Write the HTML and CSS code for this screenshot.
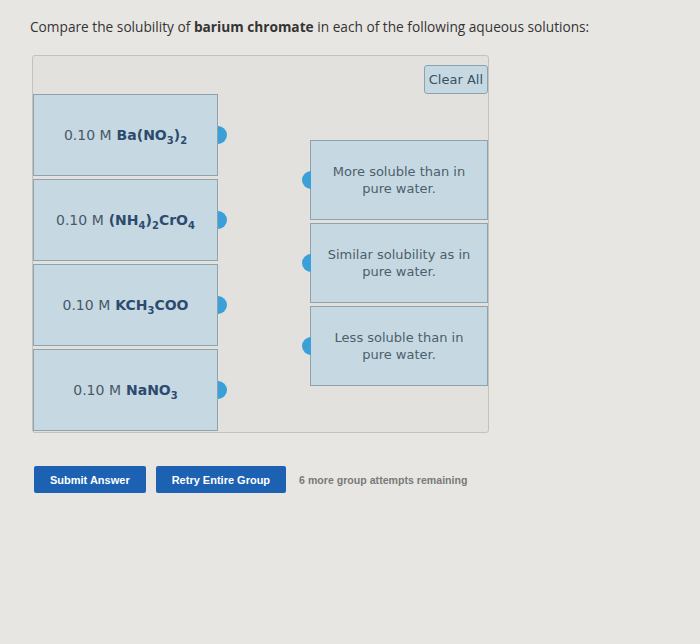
FILE: index.html
```html
<!DOCTYPE html>
<html lang="en">
<head>
    <meta charset="UTF-8">
    <meta name="viewport" content="width=device-width, initial-scale=1.0">
    <title>Barium Chromate Solubility</title>
    <link rel="stylesheet" href="styles.css">
</head>
<body>
    <p class="question">Compare the solubility of <b>barium chromate</b> in each of the following aqueous solutions:</p>

    <!-- Drag and drop matching area -->
    <div class="match-panel">
        <div class="item-column">
            <div class="item">0.10 M <span class="formula">Ba(NO<sub>3</sub>)<sub>2</sub></span></div>
            <div class="item">0.10 M <span class="formula">(NH<sub>4</sub>)<sub>2</sub>CrO<sub>4</sub></span></div>
            <div class="item">0.10 M <span class="formula">KCH<sub>3</sub>COO</span></div>
            <div class="item">0.10 M <span class="formula">NaNO<sub>3</sub></span></div>
        </div>
        <div class="target-column">
            <button type="button" class="clear-button">Clear All</button>
            <div class="targets">
                <div class="target">More soluble than in pure water.</div>
                <div class="target">Similar solubility as in pure water.</div>
                <div class="target">Less soluble than in pure water.</div>
            </div>
        </div>
    </div>

    <div class="actions">
        <button type="button" class="action-button">Submit Answer</button>
        <button type="button" class="action-button">Retry Entire Group</button>
        <span class="attempts">6 more group attempts remaining</span>
    </div>
</body>
</html>
```

FILE: styles.css
```css
body {
    margin: 0;
    padding: 17px 30px;
    background-color: #e8e6e2;
    font-family: "DejaVu Sans", Verdana, sans-serif;
}
.question {
    margin: 0 0 19px 0;
    font-family: "Open Sans", Arial, sans-serif;
    font-size: 13.7px;
    line-height: 19px;
    color: #343434;
}
.question b {
    font-weight: 700;
}

/* Matching panel */
.match-panel {
    box-sizing: border-box;
    width: 457px;
    height: 378px;
    margin-left: 2px;
    border: 1px solid #c4c2bd;
    border-radius: 3px;
    background-color: #e3e1dd;
    display: flex;
    justify-content: space-between;
}
.item-column {
    display: flex;
    flex-direction: column;
    gap: 3px;
    padding-top: 38px;
}
.item, .target {
    position: relative;
    box-sizing: border-box;
    display: flex;
    align-items: center;
    justify-content: center;
    text-align: center;
    background-color: #c6d9e3;
    border: 1px solid #8fa3ad;
}
.item {
    width: 185px;
    height: 82px;
    font-size: 14px;
    color: #4a5866;
}
.formula {
    margin-left: 5px;
    font-weight: bold;
    color: #2d4b6e;
}
.formula sub {
    font-size: 10px;
    line-height: 0;
    vertical-align: -4px;
}
/* connector tabs */
.item::after, .target::before {
    content: "";
    position: absolute;
    top: 50%;
    width: 9px;
    height: 18px;
    margin-top: -9px;
    background-color: #3b9fd8;
}
.item::after {
    right: -10px;
    border-radius: 0 9px 9px 0;
}
.target::before {
    left: -9px;
    border-radius: 9px 0 0 9px;
}

.target-column {
    display: flex;
    flex-direction: column;
    align-items: flex-end;
    padding-top: 9px;
}
.clear-button {
    height: 29px;
    padding: 0 4px;
    background-color: #c6d9e3;
    border: 1px solid #8aa3ae;
    border-radius: 3px;
    font-family: "DejaVu Sans", Verdana, sans-serif;
    font-size: 13px;
    color: #3b4f5e;
}
.targets {
    display: flex;
    flex-direction: column;
    gap: 3px;
    margin-top: 46px;
}
.target {
    width: 178px;
    height: 80px;
    padding: 0 10px;
    font-size: 13px;
    line-height: 17px;
    color: #4c5f6c;
}

/* Bottom buttons */
.actions {
    display: flex;
    align-items: center;
    gap: 10px;
    margin-top: 33px;
    margin-left: 4px;
}
.action-button {
    height: 27px;
    padding: 0 16px;
    background-color: #1d61b3;
    color: white;
    border: none;
    border-radius: 2px;
    font-family: "Liberation Sans", Arial, sans-serif;
    font-size: 11px;
    font-weight: bold;
}
.attempts {
    margin-left: 3px;
    font-family: "Liberation Sans", Arial, sans-serif;
    font-size: 10.6px;
    font-weight: bold;
    color: #7a7a7a;
}
```
